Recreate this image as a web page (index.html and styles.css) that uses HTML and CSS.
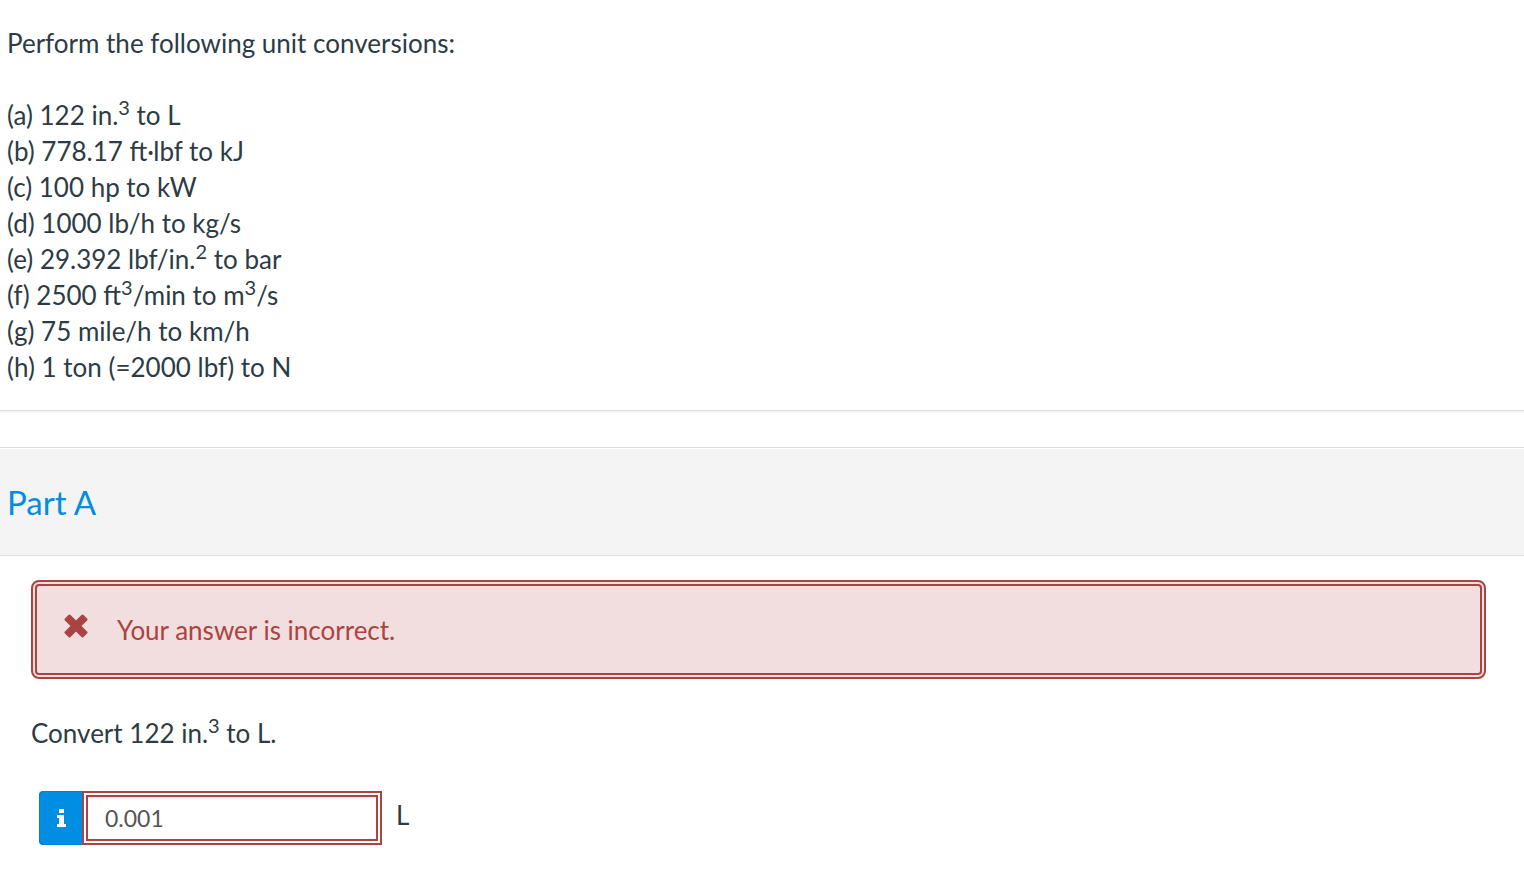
FILE: index.html
```html
<!DOCTYPE html>
<html lang="en">
<head>
  <meta charset="UTF-8">
  <title>Unit Conversions</title>
  <link rel="stylesheet" href="styles.css">
</head>
<body>
<div class="question">
  <p>Perform the following unit conversions:</p>
  <p>
    (a) 122 in.<sup>3</sup> to L<br>
    (b) 778.17 ft·lbf to kJ<br>
    (c) 100 hp to kW<br>
    (d) 1000 lb/h to kg/s<br>
    (e) 29.392 lbf/in.<sup>2</sup> to bar<br>
    (f) 2500 ft<sup>3</sup>/min to m<sup>3</sup>/s<br>
    (g) 75 mile/h to km/h<br>
    (h) 1 ton (=2000 lbf) to N
  </p>
</div>
<div class="part-header">
  <h2>Part A</h2>
</div>
<div class="part-body">
  <div class="alert" role="alert">
    <svg class="alert-icon" viewBox="0 0 24 24" aria-hidden="true">
      <g fill="currentColor" stroke="currentColor" stroke-width="3" stroke-linejoin="round">
        <path d="M5.5 2L2 5.5L18.5 22L22 18.5Z"/>
        <path d="M18.5 2L22 5.5L5.5 22L2 18.5Z"/>
      </g>
    </svg>
    <span>Your answer is incorrect.</span>
  </div>
  <label class="prompt" for="answer">Convert 122 in.<sup>3</sup> to L.</label>
  <div class="answer-row">
    <button type="button" class="info-btn" aria-label="Information">
      <svg viewBox="0 0 9 18" aria-hidden="true">
        <path d="M2 0H7V4H2ZM0 6H7V15H9V18H0V15H2V9H0Z" fill="currentColor"/>
      </svg>
    </button>
    <input type="text" name="answer" id="answer" value="0.001">
    <span class="unit">L</span>
  </div>
</div>
</body>
</html>
```
FILE: styles.css
```css
* {
  box-sizing: border-box;
}

body {
  margin: 0;
  font-family: Lato, "Liberation Sans", sans-serif;
  font-size: 26px;
  line-height: 36px;
  color: #2d3b45;
  background-color: #fff;
}

.question {
  padding: 25px 7px;
  border-bottom: 1px solid #ddd;
  box-shadow: 0 2px 0 #f5f5f5;
}

.question p {
  margin: 0 0 36px;
}

.question p:last-child {
  margin-bottom: 0;
}

sup {
  font-size: 20px;
  line-height: 0;
  position: relative;
  top: -10px;
  vertical-align: baseline;
}

.part-header {
  margin-top: 36px;
  padding: 36px 7px 35px;
  background-color: #f4f4f4;
  border-top: 1px solid #ddd;
  border-bottom: 1px solid #ddd;
  box-shadow: inset 0 1px 0 #fff;
}

.part-header h2 {
  margin: 0;
  font-size: 33px;
  font-weight: 400;
  line-height: 36px;
  color: #008ee2;
}

.part-body {
  padding: 24px 38px 24px 31px;
}

.alert {
  display: flex;
  align-items: flex-start;
  gap: 29px;
  padding: 26px 27px 25px;
  color: #a94442;
  background-color: #f2dede;
  border: 6px double #a94442;
  border-radius: 8px;
}

.alert-icon {
  width: 24px;
  height: 24px;
  margin-top: 2px;
}

.prompt {
  display: block;
  margin: 36px 0 40px;
}

.answer-row {
  display: flex;
  align-items: center;
  padding-left: 8px;
}

.info-btn {
  display: flex;
  align-items: center;
  justify-content: center;
  width: 43px;
  height: 54px;
  padding: 0;
  color: #fff;
  background-color: #008ee2;
  border: 1px solid #0081d0;
  border-right: none;
  border-radius: 4px 0 0 4px;
  cursor: pointer;
}

.info-btn svg {
  width: 9px;
  height: 18px;
}

.answer-row input {
  width: 300px;
  height: 54px;
  padding: 0 17px;
  font-family: inherit;
  font-size: 23px;
  color: #555;
  background-color: #fff;
  border: 6px double #a94442;
  border-radius: 0;
  box-shadow: inset 0 2px 2px rgba(0, 0, 0, 0.08);
}

.answer-row input:focus {
  outline: none;
}

.unit {
  margin-left: 14px;
  padding-bottom: 6px;
}
```
